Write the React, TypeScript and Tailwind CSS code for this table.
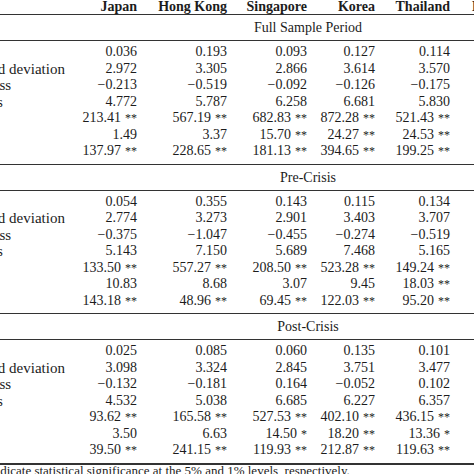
const columns = [
  { name: "Japan", w: "w-[57px]" },
  { name: "Hong Kong", w: "w-[90px]" },
  { name: "Singapore", w: "w-[80px]" },
  { name: "Korea", w: "w-[68px]" },
  { name: "Thailand", w: "w-[75px]" },
  { name: "Indonesia", w: "w-[80px]" },
];

const labels = ["Mean", "Standard deviation", "Skewness", "Kurtosis", "JB", "Q(10)", "Q²(10)"];

const sections = [
  {
    title: "Full Sample Period",
    rows: [
      ["0.036", "0.193", "0.093", "0.127", "0.114"],
      ["2.972", "3.305", "2.866", "3.614", "3.570"],
      ["−0.213", "−0.519", "−0.092", "−0.126", "−0.175"],
      ["4.772", "5.787", "6.258", "6.681", "5.830"],
      ["213.41 **", "567.19 **", "682.83 **", "872.28 **", "521.43 **"],
      ["1.49", "3.37", "15.70 **", "24.27 **", "24.53 **"],
      ["137.97 **", "228.65 **", "181.13 **", "394.65 **", "199.25 **"],
    ],
  },
  {
    title: "Pre-Crisis",
    rows: [
      ["0.054", "0.355", "0.143", "0.115", "0.134"],
      ["2.774", "3.273", "2.901", "3.403", "3.707"],
      ["−0.375", "−1.047", "−0.455", "−0.274", "−0.519"],
      ["5.143", "7.150", "5.689", "7.468", "5.165"],
      ["133.50 **", "557.27 **", "208.50 **", "523.28 **", "149.24 **"],
      ["10.83", "8.68", "3.07", "9.45", "18.03 **"],
      ["143.18 **", "48.96 **", "69.45 **", "122.03 **", "95.20 **"],
    ],
  },
  {
    title: "Post-Crisis",
    rows: [
      ["0.025", "0.085", "0.060", "0.135", "0.101"],
      ["3.098", "3.324", "2.845", "3.751", "3.477"],
      ["−0.132", "−0.181", "0.164", "−0.052", "0.102"],
      ["4.532", "5.038", "6.685", "6.227", "6.357"],
      ["93.62 **", "165.58 **", "527.53 **", "402.10 **", "436.15 **"],
      ["3.50", "6.63", "14.50 *", "18.20 **", "13.36 *"],
      ["39.50 **", "241.15 **", "119.93 **", "212.87 **", "119.63 **"],
    ],
  },
];

function Cell({ value }: { value: string }) {
  const [num, stars] = value.split(" ");
  return (
    <>
      {num}
      {stars && <span className="ml-[4px] text-[12px]">{stars}</span>}
    </>
  );
}

export default function App() {
  return (
    <div className="h-[474px] w-[474px] overflow-hidden bg-white text-[#1c1c1c] [font-family:'Liberation_Serif',serif]">
      <div className="-ml-[48px] -mt-[2px] w-[620px] text-[14px]">
        <div className="flex h-[16px] items-center font-bold">
          <div className="w-[128px]" />
          {columns.map((c) => (
            <div key={c.name} className={`${c.w} whitespace-nowrap text-right`}>
              {c.name}
            </div>
          ))}
        </div>

        {sections.map((s) => (
          <div key={s.title}>
            <div className="h-px bg-[#333]" />
            <div className="flex h-[25px] items-center">
              <div className="w-[128px]" />
              <div className="w-[456px] text-center">{s.title}</div>
            </div>
            <div className="h-px bg-[#333]" />
            <div className="pb-[4px] pt-[3px]">
              {s.rows.map((row, ri) => (
                <div key={ri} className="flex h-[16.5px] items-center whitespace-nowrap leading-[16.5px]">
                  <div className="w-[128px] text-[15px]">{labels[ri]}</div>
                  {row.map((v, ci) => (
                    <div key={ci} className={`${columns[ci].w} text-right`}>
                      <Cell value={v} />
                    </div>
                  ))}
                </div>
              ))}
            </div>
          </div>
        ))}

        <div className="h-[2px] bg-[#333]" />
        <div className="-ml-[10px] whitespace-nowrap text-[13px] leading-[11px]">
          * and ** indicate statistical significance at the 5% and 1% levels, respectively.
        </div>
      </div>
    </div>
  );
}
